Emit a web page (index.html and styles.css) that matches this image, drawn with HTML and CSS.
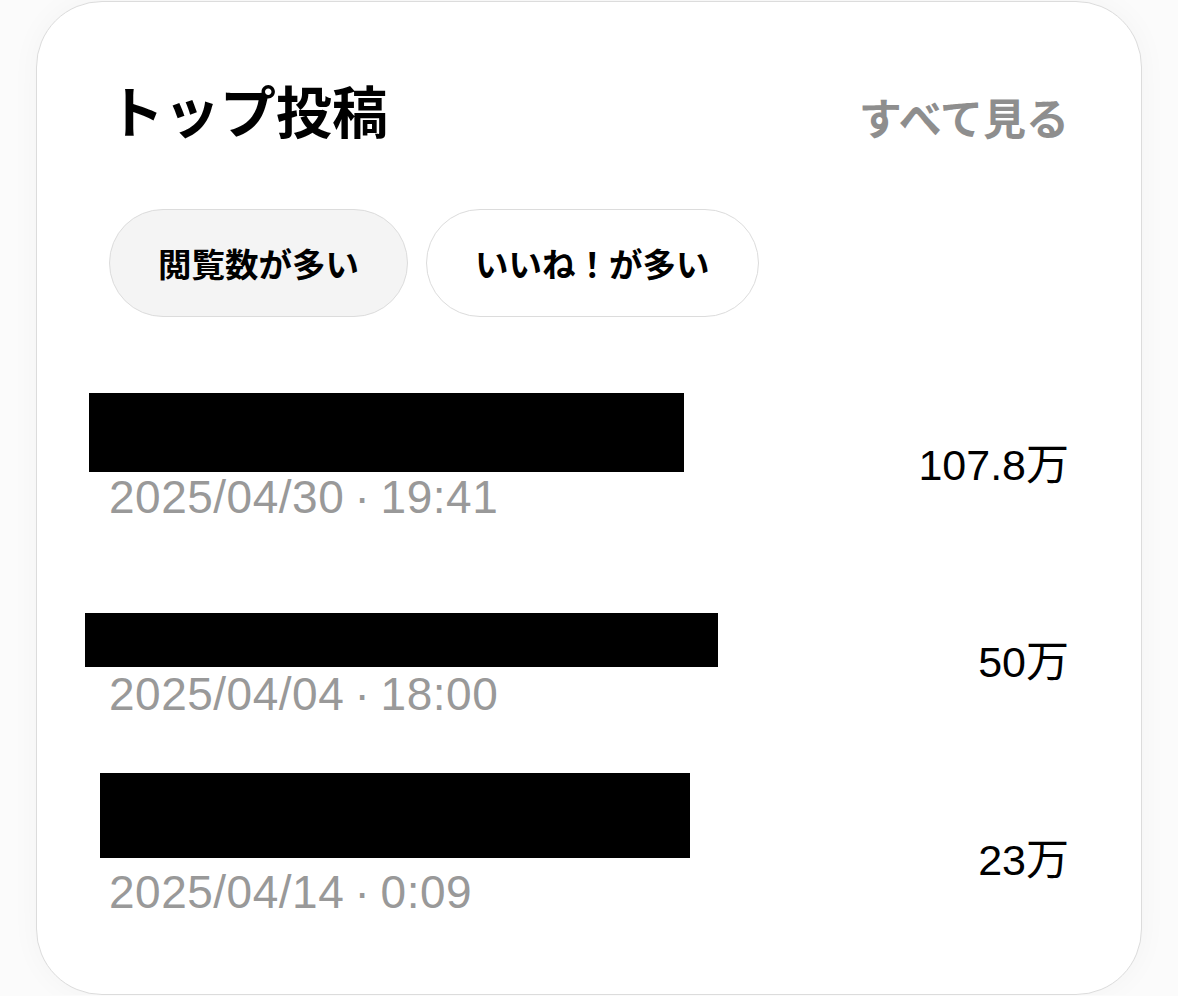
FILE: index.html
```html
<!DOCTYPE html>
<html lang="ja">
<head>
<meta charset="utf-8">
<title>トップ投稿</title>
<link rel="stylesheet" href="styles.css">
</head>
<body>
<section class="card">
  <header class="card-header">
    <h2 class="title">トップ投稿</h2>
    <a class="see-all" href="#">すべて見る</a>
  </header>
  <div class="tabs">
    <button class="pill pill-active">閲覧数が多い</button>
    <button class="pill">いいね！が多い</button>
  </div>
  <ul class="posts">
    <li class="post post-1">
      <div class="post-main">
        <div class="redacted" aria-label="非表示"></div>
        <div class="date">2025/04/30 · 19:41</div>
      </div>
      <div class="count">107.8万</div>
    </li>
    <li class="post post-2">
      <div class="post-main">
        <div class="redacted" aria-label="非表示"></div>
        <div class="date">2025/04/04 · 18:00</div>
      </div>
      <div class="count">50万</div>
    </li>
    <li class="post post-3">
      <div class="post-main">
        <div class="redacted" aria-label="非表示"></div>
        <div class="date">2025/04/14 · 0:09</div>
      </div>
      <div class="count">23万</div>
    </li>
  </ul>
</section>
</body>
</html>
```
FILE: styles.css
```css
* { box-sizing: border-box; }
html, body {
  margin: 0;
  padding: 0;
  background: #fbfbfb;
}
body {
  font-family: "Liberation Sans", "Noto Sans CJK JP", sans-serif;
  color: #000;
}
.card {
  margin: 1px 0 0 36px;
  width: 1106px;
  height: 994px;
  background: #fff;
  border: 1.5px solid #dcdcdc;
  border-radius: 66px;
  box-shadow: 0 0 30px rgba(0, 0, 0, 0.035);
  padding: 67px 72px 0 75px;
}
.card-header {
  display: flex;
  justify-content: space-between;
  align-items: center;
  height: 80px;
}
.title {
  margin: 0 0 0 -4px;
  font-family: "Noto Sans CJK JP", sans-serif;
  font-size: 56px;
  font-weight: 700;
  line-height: 80px;
  letter-spacing: 0;
}
.see-all {
  font-family: "Noto Sans CJK JP", sans-serif;
  font-size: 43px;
  font-weight: 600;
  color: #8e8e8e;
  text-decoration: none;
  line-height: 80px;
  margin-top: 14px;
}
.tabs {
  display: flex;
  gap: 18px;
  margin-top: 60px;
  margin-left: -3px;
}
.pill {
  height: 108px;
  padding: 0 48px;
  border-radius: 54px;
  border: 1.5px solid #dcdcdc;
  background: #fff;
  font-family: "Noto Sans CJK JP", sans-serif;
  font-size: 33.5px;
  font-weight: 700;
  color: #000;
  line-height: 1;
}
.pill-active {
  background: #f4f4f4;
}
.posts {
  list-style: none;
  margin: 0;
  padding: 0;
}
.post {
  display: flex;
  justify-content: space-between;
  align-items: flex-end;
}
.post-main {
  display: flex;
  flex-direction: column;
}
.redacted {
  background: #000;
}
.date {
  font-size: 46px;
  line-height: 50px;
  letter-spacing: 0.5px;
  word-spacing: -3px;
  color: #999;
  margin-left: -3px;
}
.count {
  font-size: 43px;
  line-height: 50px;
  margin-bottom: 32px;
}
.post-1 { margin-top: 76px; }
.post-1 .redacted { width: 595px; height: 79px; margin-left: -23px; }
.post-2 { margin-top: 91px; }
.post-2 .redacted { width: 633px; height: 54px; margin-left: -27px; margin-bottom: 2px; }
.post-3 { margin-top: 54px; }
.post-3 .redacted { width: 590px; height: 85px; margin-left: -12px; margin-bottom: 9px; }
```
